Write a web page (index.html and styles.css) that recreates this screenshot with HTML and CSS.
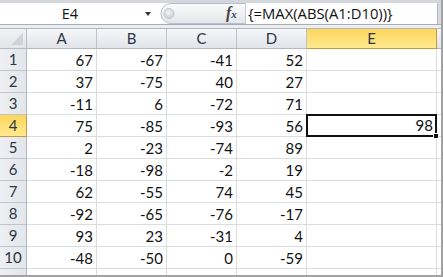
FILE: index.html
```html
<!DOCTYPE html>
<html>
<head>
<meta charset="utf-8">
<link rel="stylesheet" href="styles.css">
</head>
<body>
<div class="win">
  <div class="topstrip"></div>
  <div class="fbar">
    <div class="namebox"><span class="nb-text">E4</span><span class="nb-arrow"></span></div>
    <div class="grip">
      <svg width="90" height="21" viewBox="0 0 90 21">
        <defs>
          <linearGradient id="g1" x1="0" y1="0" x2="0" y2="1">
            <stop offset="0" stop-color="#fbfbfc"/>
            <stop offset="1" stop-color="#e3e6ea"/>
          </linearGradient>
          <radialGradient id="g2" cx="0.45" cy="0.4" r="0.6">
            <stop offset="0" stop-color="#f4f5f6"/>
            <stop offset="1" stop-color="#c9cdd2"/>
          </radialGradient>
        </defs>
        <path d="M14 0.5 H90 V20.5 H14 A10 10 0 0 1 14 0.5 Z" fill="url(#g1)" stroke="#b9bec6"/>
        <circle cx="12" cy="10.5" r="5" fill="url(#g2)" stroke="#c3c7cc"/>
      </svg>
      <span class="fx"><i>f</i><i class="fx-x">x</i></span>
    </div>
    <div class="formula">{=MAX(ABS(A1:D10))}</div>
    <div class="fscroll"></div>
  </div>
  <div class="sep"></div>
  <div class="grid">
    <div class="corner"><span class="tri"></span></div>
    <div class="ch">A</div><div class="ch">B</div><div class="ch">C</div><div class="ch">D</div><div class="ch ch-act">E</div><div class="ch ch-f"></div>

    <div class="rh">1</div><div class="c">67</div><div class="c">-67</div><div class="c">-41</div><div class="c">52</div><div class="c"></div><div class="c cf"></div>
    <div class="rh">2</div><div class="c">37</div><div class="c">-75</div><div class="c">40</div><div class="c">27</div><div class="c"></div><div class="c cf"></div>
    <div class="rh">3</div><div class="c">-11</div><div class="c">6</div><div class="c">-72</div><div class="c">71</div><div class="c"></div><div class="c cf"></div>
    <div class="rh rh-act">4</div><div class="c">75</div><div class="c">-85</div><div class="c">-93</div><div class="c">56</div><div class="c sel">98<span class="handle"></span></div><div class="c cf"></div>
    <div class="rh">5</div><div class="c">2</div><div class="c">-23</div><div class="c">-74</div><div class="c">89</div><div class="c"></div><div class="c cf"></div>
    <div class="rh">6</div><div class="c">-18</div><div class="c">-98</div><div class="c">-2</div><div class="c">19</div><div class="c"></div><div class="c cf"></div>
    <div class="rh">7</div><div class="c">62</div><div class="c">-55</div><div class="c">74</div><div class="c">45</div><div class="c"></div><div class="c cf"></div>
    <div class="rh">8</div><div class="c">-92</div><div class="c">-65</div><div class="c">-76</div><div class="c">-17</div><div class="c"></div><div class="c cf"></div>
    <div class="rh">9</div><div class="c">93</div><div class="c">23</div><div class="c">-31</div><div class="c">4</div><div class="c"></div><div class="c cf"></div>
    <div class="rh">10</div><div class="c">-48</div><div class="c">-50</div><div class="c">0</div><div class="c">-59</div><div class="c"></div><div class="c cf"></div>
    <div class="rh"></div><div class="c"></div><div class="c"></div><div class="c"></div><div class="c"></div><div class="c"></div><div class="c cf"></div>
  </div>
</div>
</body>
</html>
```

FILE: styles.css
```css
* { box-sizing: border-box; }
html, body { margin: 0; padding: 0; background: #ffffff; }
body { font-family: Lato, "Liberation Sans", sans-serif; }

.win {
  width: 443px;
  height: 277px;
  overflow: hidden;
  border-right: 2px solid #a2a2a2;
  border-bottom: 2px solid #a2a2a2;
  background: #fff;
}

.topstrip {
  height: 3px;
  background: #d3d6db;
}

.fbar {
  height: 21px;
  display: flex;
  background: #fff;
}
.namebox {
  width: 157px;
  position: relative;
  display: flex;
  align-items: center;
}
.nb-text {
  width: 140px;
  text-align: center;
  font-family: "Open Sans", Lato, sans-serif;
  font-size: 14.5px;
  color: #111;
  line-height: 21px;
}
.nb-arrow {
  position: absolute;
  left: 145px;
  top: 9px;
  width: 0; height: 0;
  border-left: 3.5px solid transparent;
  border-right: 3.5px solid transparent;
  border-top: 4px solid #333;
}
.grip {
  width: 88px;
  position: relative;
  overflow: hidden;
}
.grip svg { display: block; }
.fx {
  position: absolute;
  left: 69px;
  top: 1px;
  font-family: "Liberation Serif", serif;
  font-size: 16px;
  color: #444;
  line-height: 18px;
  font-weight: bold;
}
.fx i { font-style: italic; }
.fx-x { font-size: 11px; }
.formula {
  flex: 1;
  border-left: 1px solid #c8ccd2;
  padding-left: 2px;
  font-family: "Open Sans", Lato, sans-serif;
  font-size: 14.8px;
  line-height: 21px;
  color: #111;
  white-space: nowrap;
}
.fscroll {
  width: 4px;
  background: #d6d9de;
  border-left: 1px solid #b7bcc3;
}

.sep {
  height: 5px;
  border-top: 1px solid #a9aeb6;
  border-bottom: 1px solid #b2b6bd;
  background: #eceef1;
}

.grid {
  display: grid;
  grid-template-columns: 27px 70px 70px 70px 70px 130px 4px;
  grid-template-rows: 20px repeat(10, 22px) 8px;
}

.corner {
  background: linear-gradient(#f1f2f4, #e2e5e9);
  border-right: 1px solid #b8bcc3;
  border-bottom: 1px solid #b8bcc3;
  position: relative;
}
.tri {
  position: absolute;
  right: 3px;
  bottom: 3px;
  width: 0; height: 0;
  border-left: 12px solid transparent;
  border-bottom: 12px solid #cfd3d8;
}

.ch {
  background: linear-gradient(#f6f7f9, #e1e4e9);
  border-right: 1px solid #c0c4ca;
  border-bottom: 1px solid #b3b8bf;
  text-align: center;
  font-size: 15px;
  line-height: 19px;
  color: #2d3645;
}
.ch-act {
  background: linear-gradient(#fdd65c, #ffe98f);
  border-right: 1px solid #c49a3e;
  border-bottom: 1px solid #c49a3e;
}
.ch-f { border-right: none; }

.rh {
  background: linear-gradient(90deg, #eef0f3, #e3e6ea);
  border-right: 1px solid #b3b8bf;
  border-bottom: 1px solid #c0c4ca;
  text-align: center;
  font-size: 15px;
  line-height: 21px;
  color: #2d3645;
}
.rh-act {
  background: linear-gradient(#fdd65c, #ffe98f);
  border-right: 1px solid #c49a3e;
  border-bottom: 1px solid #c49a3e;
}

.c {
  border-right: 1px solid #dadcdd;
  border-bottom: 1px solid #dadcdd;
  text-align: right;
  padding-right: 3px;
  font-size: 15px;
  line-height: 22px;
  color: #111;
}
.cf { border-right: none; padding: 0; }

.sel {
  position: relative;
  border: 2px solid #111;
  margin: -1px 0 0 -1px;
  width: 131px;
  height: 23px;
  line-height: 19px;
  padding-right: 2px;
}
.handle {
  position: absolute;
  right: -4px;
  bottom: -4px;
  width: 6px;
  height: 6px;
  background: #111;
  border: 1px solid #fff;
}
```
